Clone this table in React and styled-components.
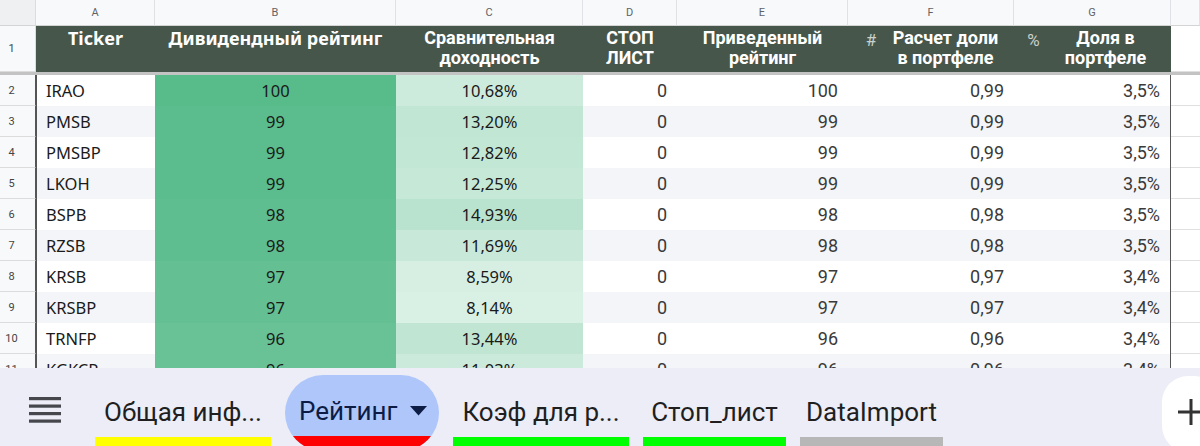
import React from "react";
import styled, { createGlobalStyle } from "styled-components";

const GlobalStyle = createGlobalStyle`
  body {
    margin: 0;
    background: #ffffff;
  }
`;

const COLS = "36px 119px 241px 187px 94px 171px 166px 157px 1fr";

const Page = styled.div`
  width: 1200px;
  height: 446px;
  display: flex;
  flex-direction: column;
  overflow: hidden;
`;

const Sheet = styled.div`
  height: 368px;
  overflow: hidden;
  background: #fff;
`;

const Row = styled.div`
  display: grid;
  grid-template-columns: ${COLS};
  height: ${p => p.$h}px;
  box-sizing: border-box;
  border-bottom: ${p => (p.$frozen ? "3px solid #c3c3c3" : "none")};
`;

const Corner = styled.div`
  background: #eef0f2;
  border-right: 1px solid #dadce0;
  border-bottom: 1px solid #d4d4d4;
`;

const LetterCell = styled.div`
  display: flex;
  align-items: center;
  justify-content: center;
  background: #f8f9fa;
  border-right: 1px solid #dfe1e5;
  border-bottom: 1px solid #d4d4d4;
  font-family: Roboto, sans-serif;
  font-size: 11px;
  color: #5f6368;
`;

const RowNum = styled.div`
  display: flex;
  align-items: center;
  justify-content: center;
  padding-right: 12px;
  box-sizing: border-box;
  background: #f8f9fa;
  border-right: 1px solid ${p => (p.$dark ? "#555" : "#dadce0")};
  border-bottom: 1px solid #dcdcdc;
  font-family: Roboto, sans-serif;
  font-size: 11px;
  color: #444;
`;

const HeadCell = styled.div`
  display: flex;
  align-items: flex-start;
  justify-content: center;
  padding-top: 2px;
  box-sizing: border-box;
  background: #47564b;
  color: #fff;
  font-family: ${p => (p.$noto ? '"Noto Sans"' : "Roboto")}, sans-serif;
  font-weight: 700;
  font-size: 18px;
  line-height: 20px;
  text-align: center;
  white-space: nowrap;
  padding-left: ${p => p.$padL || 0}px;
`;

const HeadIcon = styled.span`
  width: ${p => p.$w}px;
  padding-top: 2px;
  font-family: Roboto, sans-serif;
  font-weight: 400;
  font-size: 17px;
  color: #c9d1cb;
`;

const HeadText = styled.span`
  flex: 1;
  text-align: center;
`;

const BlankCell = styled.div`
  background: #fff;
  border-bottom: 1px solid #e0e0e0;
`;

const DataCell = styled.div`
  display: flex;
  align-items: center;
  justify-content: ${p =>
    p.$align === "left" ? "flex-start" : p.$align === "right" ? "flex-end" : "center"};
  padding-left: ${p => (p.$align === "left" ? 9 : 0)}px;
  padding-right: ${p => (p.$align === "right" ? 10 : 0)}px;
  box-sizing: border-box;
  background: ${p => p.$bg};
  border-left: ${p => (p.$edgeL ? "1px solid #555" : "none")};
  border-right: ${p => (p.$edgeR ? "1px solid #555" : "none")};
  font-family: ${p => (p.$roboto ? "Roboto" : '"Noto Sans"')}, sans-serif;
  font-size: ${p => (p.$roboto ? 18 : 16.5)}px;
  color: ${p => (p.$roboto ? "#3a3a3a" : "#1a1a1a")};
  white-space: nowrap;
`;

const TabBar = styled.div`
  flex: 1;
  display: flex;
  align-items: stretch;
  background: #ecedf7;
  overflow: hidden;
`;

const Menu = styled.div`
  display: flex;
  align-items: center;
  margin: 0 34px 0 29px;
  padding-top: 6px;
`;

const Tabs = styled.div`
  display: flex;
  gap: 14px;
  align-items: stretch;
`;

const Tab = styled.div`
  width: ${p => p.$w}px;
  display: flex;
  flex-direction: column;
`;

const TabLabel = styled.div`
  flex: 1;
  display: flex;
  align-items: center;
  justify-content: center;
  padding-top: 18px;
  font-family: Roboto, sans-serif;
  font-size: 26px;
  color: #1f1f1f;
  white-space: nowrap;
`;

const TabColor = styled.div`
  height: 9px;
  background: ${p => p.$color};
`;

const ActiveTab = styled.div`
  width: 154px;
  height: 76px;
  margin-top: 7px;
  border-radius: 38px;
  overflow: hidden;
  background: #aec6fa;
  display: flex;
  flex-direction: column;
`;

const ActiveLabel = styled.div`
  flex: 1;
  display: flex;
  align-items: center;
  gap: 13px;
  padding-left: 14px;
  padding-top: 11px;
  font-family: Roboto, sans-serif;
  font-size: 26px;
  color: #0d1c45;
`;

const ActiveColor = styled.div`
  height: 15px;
  background: #ff0000;
`;

const AddButton = styled.div`
  margin-left: auto;
  margin-right: -20px;
  margin-top: 8px;
  width: 58px;
  height: 76px;
  border-radius: 26px;
  background: #ffffff;
  display: flex;
  align-items: flex-start;
  justify-content: center;
  padding-top: 23px;
  box-sizing: border-box;
`;

const letters = ["A", "B", "C", "D", "E", "F", "G", ""];

const rows = [
  ["IRAO", 100, "10,68%", 10.68, "0", "100", "0,99", "3,5%"],
  ["PMSB", 99, "13,20%", 13.2, "0", "99", "0,99", "3,5%"],
  ["PMSBP", 99, "12,82%", 12.82, "0", "99", "0,99", "3,5%"],
  ["LKOH", 99, "12,25%", 12.25, "0", "99", "0,99", "3,5%"],
  ["BSPB", 98, "14,93%", 14.93, "0", "98", "0,98", "3,5%"],
  ["RZSB", 98, "11,69%", 11.69, "0", "98", "0,98", "3,5%"],
  ["KRSB", 97, "8,59%", 8.59, "0", "97", "0,97", "3,4%"],
  ["KRSBP", 97, "8,14%", 8.14, "0", "97", "0,97", "3,4%"],
  ["TRNFP", 96, "13,44%", 13.44, "0", "96", "0,96", "3,4%"],
  ["KGKCP", 96, "11,03%", 11.03, "0", "96", "0,96", "3,4%"],
];

// white -> #57bb8a colour scale
const scale = t => {
  const k = Math.max(0, Math.min(1, t));
  const mix = (a, b) => Math.round(a + (b - a) * k);
  return `rgb(${mix(255, 87)}, ${mix(255, 187)}, ${mix(255, 138)})`;
};

const Hamburger = () => (
  <svg width="32" height="26" viewBox="0 0 32 26">
    {[0, 7.5, 15, 22.5].map(y => (
      <rect key={y} x="0" y={y} width="32" height="3.2" fill="#45474d" />
    ))}
  </svg>
);

const App = () => {
  return (
    <Page>
      <GlobalStyle />
      <Sheet>
        <Row $h={26}>
          <Corner />
          {letters.map((l, i) => (
            <LetterCell key={i}>{l}</LetterCell>
          ))}
        </Row>
        <Row $h={49} $frozen>
          <RowNum>1</RowNum>
          <HeadCell $noto>Ticker</HeadCell>
          <HeadCell $noto>Дивидендный рейтинг</HeadCell>
          <HeadCell>
            Сравнительная
            <br />
            доходность
          </HeadCell>
          <HeadCell>
            СТОП
            <br />
            ЛИСТ
          </HeadCell>
          <HeadCell>
            Приведенный
            <br />
            рейтинг
          </HeadCell>
          <HeadCell $padL={17}>
            <HeadIcon $w={12}>#</HeadIcon>
            <HeadText>
              Расчет доли
              <br />в портфеле
            </HeadText>
          </HeadCell>
          <HeadCell $padL={13}>
            <HeadIcon $w={13}>%</HeadIcon>
            <HeadText>
              Доля в
              <br />
              портфеле
            </HeadText>
          </HeadCell>
          <BlankCell />
        </Row>
        {rows.map((r, i) => {
          const band = i % 2 === 1 ? "#f3f5f8" : "#ffffff";
          return (
            <Row $h={31} key={r[0]}>
              <RowNum $dark>{i + 2}</RowNum>
              <DataCell $align="left" $bg={band} $edgeL>
                {r[0]}
              </DataCell>
              <DataCell $bg={scale((r[1] - 60) / 40)}>{r[1]}</DataCell>
              <DataCell $bg={scale(r[3] / 36)}>{r[2]}</DataCell>
              <DataCell $align="right" $bg={band} $roboto>
                {r[4]}
              </DataCell>
              <DataCell $align="right" $bg={band} $roboto>
                {r[5]}
              </DataCell>
              <DataCell $align="right" $bg={band} $roboto>
                {r[6]}
              </DataCell>
              <DataCell $align="right" $bg={band} $roboto $edgeR>
                {r[7]}
              </DataCell>
              <BlankCell />
            </Row>
          );
        })}
      </Sheet>
      <TabBar>
        <Menu>
          <Hamburger />
        </Menu>
        <Tabs>
          <Tab $w={176}>
            <TabLabel>Общая инф...</TabLabel>
            <TabColor $color="#ffff00" />
          </Tab>
          <ActiveTab>
            <ActiveLabel>
              Рейтинг
              <svg width="17" height="10" viewBox="0 0 17 10">
                <path d="M0 0 L17 0 L8.5 9.5 Z" fill="#0d1c45" />
              </svg>
            </ActiveLabel>
            <ActiveColor />
          </ActiveTab>
          <Tab $w={176}>
            <TabLabel>Коэф для р...</TabLabel>
            <TabColor $color="#00ff00" />
          </Tab>
          <Tab $w={143}>
            <TabLabel>Стоп_лист</TabLabel>
            <TabColor $color="#00ff00" />
          </Tab>
          <Tab $w={143}>
            <TabLabel>DataImport</TabLabel>
            <TabColor $color="#b7b7b7" />
          </Tab>
        </Tabs>
        <AddButton>
          <svg width="26" height="26" viewBox="0 0 26 26">
            <path d="M13 0 V26 M0 13 H26" stroke="#333" strokeWidth="3" />
          </svg>
        </AddButton>
      </TabBar>
    </Page>
  );
};

export default App;
